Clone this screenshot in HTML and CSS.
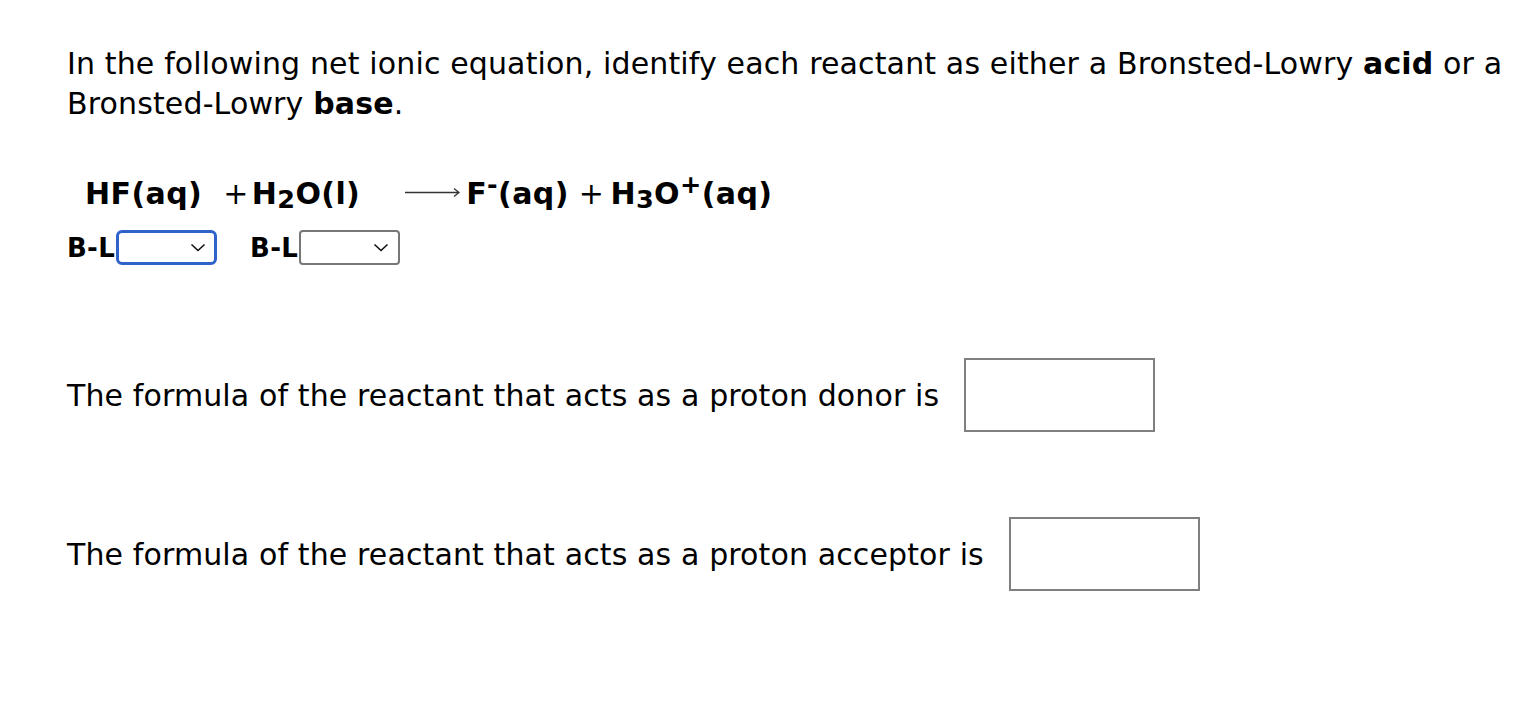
FILE: index.html
```html
<!DOCTYPE html>
<html>
<head>
<meta charset="utf-8">
<link rel="stylesheet" href="styles.css">
</head>
<body>
<div class="page">
  <p class="intro">In the following net ionic equation, identify each reactant as either a Bronsted-Lowry <b>acid</b> or a Bronsted-Lowry <b>base</b>.</p>

  <div class="equation">
    <div class="eq-row formulas">
      <span class="sp hf">HF(aq)</span>
      <span class="plus p1">+</span>
      <span class="sp h2o">H<sub>2</sub>O(l)</span>
      <svg class="arrow" width="56" height="12" viewBox="0 0 56 12"><path d="M0 6.5H54M49 2.5L54 6.5L49 10.5" fill="none" stroke="#333" stroke-width="1.3"/></svg>
      <span class="sp">F<sup class="minus">-</sup>(aq)</span>
      <span class="plus p2">+</span>
      <span class="sp">H<sub>3</sub>O<sup>+</sup>(aq)</span>
    </div>
    <div class="eq-row answers">
      <label class="bl">B-L<span class="select focused"><svg class="chev" width="16" height="9" viewBox="0 0 16 9"><path d="M1.5 1.5L8 7.5L14.5 1.5" fill="none" stroke="#111" stroke-width="1.6"/></svg></span></label>
      <label class="bl second">B-L<span class="select"><svg class="chev" width="16" height="9" viewBox="0 0 16 9"><path d="M1.5 1.5L8 7.5L14.5 1.5" fill="none" stroke="#111" stroke-width="1.6"/></svg></span></label>
    </div>
  </div>

  <div class="question q1">
    <span class="qtext">The formula of the reactant that acts as a proton donor is</span>
    <span class="box"></span>
  </div>
  <div class="question q2">
    <span class="qtext">The formula of the reactant that acts as a proton acceptor is</span>
    <span class="box"></span>
  </div>
</div>
</body>
</html>
```

FILE: styles.css
```css
html, body {
  margin: 0;
  padding: 0;
  background: #fff;
}
body {
  font-family: "DejaVu Sans", Verdana, sans-serif;
  color: #000;
}
.page {
  padding: 44px 0 0 67px;
}
.intro {
  margin: 0;
  font-size: 30px;
  line-height: 40px;
  letter-spacing: 0.14px;
  max-width: 1460px;
}
.intro b {
  font-weight: bold;
}
.equation {
  margin-top: 52px;
}
.eq-row {
  display: flex;
  align-items: baseline;
}
.formulas {
  font-weight: bold;
  font-size: 30px;
  letter-spacing: 0.4px;
  line-height: 36px;
  padding-left: 18px;
}
.sp sub {
  font-size: 0.85em;
  vertical-align: -0.15em;
  line-height: 0;
}
.sp sup {
  font-size: 0.85em;
  vertical-align: 0.45em;
  line-height: 0;
}
.plus {
  font-weight: normal;
  font-size: 30px;
}
.p1 {
  margin-left: 21px;
  margin-right: 3px;
}
.arrow {
  margin-left: 45px;
  margin-right: 5px;
  align-self: center;
  margin-top: -4px;
}
.p2 {
  margin-left: 10px;
  margin-right: 6px;
}
.answers {
  margin-top: 18px;
  align-items: center;
}
.bl {
  display: flex;
  align-items: center;
  font-weight: bold;
  font-size: 26px;
  letter-spacing: 0.3px;
}
.bl.second {
  margin-left: 33px;
}
.select {
  display: flex;
  align-items: center;
  justify-content: flex-end;
  box-sizing: border-box;
  width: 101px;
  height: 35px;
  border: 2px solid #777;
  border-radius: 4px;
  padding-right: 9px;
  margin-left: 1px;
}
.select.focused {
  border: 3px solid #2f63c9;
  border-radius: 6px;
  padding-right: 8px;
}
.question {
  display: flex;
  align-items: center;
}
.q1 {
  margin-top: 93px;
}
.q2 {
  margin-top: 85px;
}
.qtext {
  font-size: 30px;
  letter-spacing: 0.12px;
}
.box {
  box-sizing: border-box;
  width: 191px;
  height: 74px;
  border: 2px solid #808080;
  margin-left: 25px;
}
```
